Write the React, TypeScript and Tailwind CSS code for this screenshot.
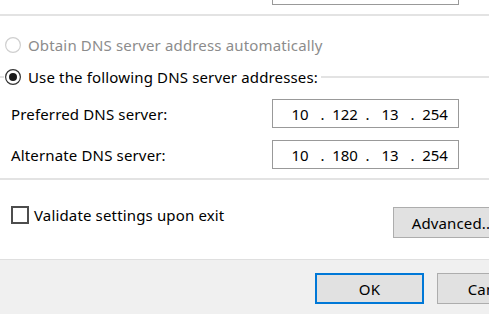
import React from "react";

const font = { fontFamily: '"Noto Sans", "Open Sans", sans-serif' };

function Radio({ checked, disabled }: { checked?: boolean; disabled?: boolean }) {
  return (
    <svg width="16" height="16" viewBox="0 0 16 16" className="shrink-0">
      <circle cx="8" cy="8" r="7.4" fill="#fff" stroke={disabled ? "#cfcfcf" : "#333"} strokeWidth="1.2" />
      {checked && <circle cx="8" cy="8" r="4" fill="#1a1a1a" />}
    </svg>
  );
}

function IpBox({ parts }: { parts: string[] }) {
  return (
    <div className="w-[187px] h-[29px] border border-[#999] bg-white flex items-center pl-[9px] shrink-0 tracking-normal">
      {parts.map((p, i) => (
        <div key={i} className="flex items-center">
          <span className="w-[36px] text-center">{p}</span>
          {i < parts.length - 1 && <span className="w-[9px] text-center">.</span>}
        </div>
      ))}
    </div>
  );
}

export default function App() {
  return (
    <div
      className="w-[489px] h-[314px] overflow-hidden bg-white text-[15px] tracking-[0.15px] text-black leading-[20px] flex flex-col"
      style={font}
    >
      <div className="h-[259px] shrink-0 flex flex-col">
        <div className="ml-[272px] w-[187px] h-[5px] border-x border-b border-[#999]" />
        <div className="mt-[9px] h-[2px] bg-[#e3e3e3]" />
        <div className="mt-[19px] h-[20px] flex items-center pl-[5px] gap-[7px] text-[#8c8c8c]">
          <Radio disabled />
          <span>Obtain DNS server address automatically</span>
        </div>
        <div className="mt-[12px] h-[20px] flex items-center">
          <div className="w-[4px] h-[2px] bg-[#e3e3e3]" />
          <div className="pl-[1px] flex items-center gap-[7px]">
            <Radio checked />
            <span>Use the following DNS server addresses:</span>
          </div>
          <div className="ml-[3px] flex-1 h-[2px] bg-[#e3e3e3]" />
        </div>
        <div className="mt-[12px] h-[29px] flex items-center">
          <span className="w-[272px] pl-[11px] shrink-0">Preferred DNS server:</span>
          <IpBox parts={["10", "122", "13", "254"]} />
        </div>
        <div className="mt-[12px] h-[29px] flex items-center">
          <span className="w-[272px] pl-[11px] shrink-0">Alternate DNS server:</span>
          <IpBox parts={["10", "180", "13", "254"]} />
        </div>
        <div className="mt-[9px] h-[2px] bg-[#e3e3e3]" />
        <div className="mt-[26px] flex items-start pl-[11px]">
          <div className="w-[382px] shrink-0 flex items-center gap-[5px] h-[18px]">
            <div className="w-[18px] h-[18px] border-2 border-[#4d4d4d] bg-white shrink-0" />
            <span>Validate settings upon exit</span>
          </div>
          <div className="mt-[1px] w-[120px] h-[31px] shrink-0 border border-[#adadad] bg-[#e1e1e1] flex items-center justify-center">
            Advanced...
          </div>
        </div>
      </div>
      <div className="flex-1 border-t border-[#dfdfdf] bg-[#f0f0f0] flex items-start pt-[13px] pl-[315px] gap-[13px]">
        <div className="w-[109px] h-[31px] shrink-0 border-2 border-[#0078d7] bg-[#e1e1e1] flex items-center justify-center">
          OK
        </div>
        <div className="w-[109px] h-[31px] shrink-0 border border-[#adadad] bg-[#e1e1e1] flex items-center justify-center">
          Cancel
        </div>
      </div>
    </div>
  );
}
